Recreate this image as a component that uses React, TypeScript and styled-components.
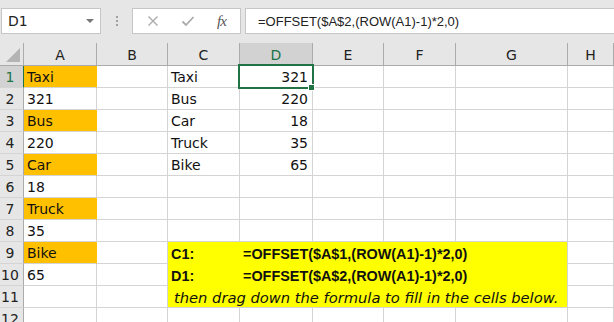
import React from "react";
import styled, { createGlobalStyle, css } from "styled-components";

const GlobalStyle = createGlobalStyle`
  html, body { margin: 0; padding: 0; background: #ffffff; overflow: hidden; }
  body { width: 614px; height: 322px; font-family: "Liberation Sans", Arial, sans-serif; }
`;

const CELL_FONT = `"DejaVu Sans", "Liberation Sans", sans-serif`;
const GRID = "#d4d4d4";
const HEAD_LINE = "#ababab";
const GREEN = "#217346";

const Page = styled.div`
  width: 614px;
  height: 322px;
  overflow: hidden;
  display: flex;
  flex-direction: column;
  background: #e6e6e6;
`;

const FormulaBar = styled.div`
  display: flex;
  align-items: center;
  height: 26px;
  padding: 8px 0 9px 1px;
`;

const Box = styled.div`
  height: 26px;
  box-sizing: border-box;
  background: #ffffff;
  border: 1px solid #c6c6c6;
  display: flex;
  align-items: center;
`;

const NameBox = styled(Box)`
  width: 100px;
  padding: 0 6px 0 6px;
  justify-content: space-between;
  font-family: ${CELL_FONT};
  font-size: 14px;
  color: #222;
`;

const Caret = styled.span`
  width: 0;
  height: 0;
  border-left: 4px solid transparent;
  border-right: 4px solid transparent;
  border-top: 4px solid #777;
`;

const Dots = styled.div`
  width: 31px;
  display: flex;
  flex-direction: column;
  align-items: center;
  gap: 2px;
  & > span {
    width: 2px;
    height: 2px;
    background: #a0a0a0;
  }
`;

const Buttons = styled(Box)`
  width: 109px;
  gap: 22px;
  padding-left: 14px;
`;

const Fx = styled.span`
  font-family: "Liberation Serif", "Times New Roman", serif;
  font-style: italic;
  font-size: 15px;
  color: #555;
  letter-spacing: -1px;
`;

const FormulaInput = styled(Box)`
  flex: 1;
  margin-left: 4px;
  margin-right: -2px;
  padding-left: 12px;
  font-family: "Liberation Sans", Arial, sans-serif;
  font-size: 13px;
  color: #222;
  white-space: nowrap;
`;

const Sheet = styled.div`
  display: grid;
  grid-template-columns: 24px 73px 71px 72px 73px 71px 72px 112px 1fr;
  grid-template-rows: 23px repeat(12, 22px);
  background: #ffffff;
`;

const Corner = styled.div`
  background: #e6e6e6;
  border-right: 1px solid ${HEAD_LINE};
  border-bottom: 1px solid ${HEAD_LINE};
  position: relative;
  &::after {
    content: "";
    position: absolute;
    right: 3px;
    bottom: 3px;
    width: 0;
    height: 0;
    border-left: 14px solid transparent;
    border-bottom: 14px solid #b4b4b4;
  }
`;

const ColHead = styled.div<{ $active?: boolean }>`
  box-sizing: border-box;
  background: ${(p) => (p.$active ? "#d2d2d2" : "#e6e6e6")};
  border-right: 1px solid ${HEAD_LINE};
  border-bottom: ${(p) => (p.$active ? `2px solid ${GREEN}` : `1px solid ${HEAD_LINE}`)};
  color: ${(p) => (p.$active ? GREEN : "#222")};
  font-family: ${CELL_FONT};
  font-size: 14px;
  display: flex;
  align-items: center;
  justify-content: center;
  padding-top: 2px;
`;

const RowHead = styled.div<{ $active?: boolean }>`
  box-sizing: border-box;
  background: ${(p) => (p.$active ? "#d2d2d2" : "#e6e6e6")};
  border-right: 1px solid ${(p) => (p.$active ? GREEN : HEAD_LINE)};
  border-bottom: 1px solid ${GRID};
  color: ${(p) => (p.$active ? GREEN : "#222")};
  font-family: ${CELL_FONT};
  font-size: 14px;
  display: flex;
  align-items: center;
  justify-content: center;
  padding: 1px 3px 0 0;
`;

const Cell = styled.div<{ $fill?: string; $right?: boolean }>`
  box-sizing: border-box;
  position: relative;
  background: ${(p) => p.$fill || "#ffffff"};
  border-right: 1px solid ${(p) => p.$fill || GRID};
  border-bottom: 1px solid ${GRID};
  font-family: ${CELL_FONT};
  font-size: 14px;
  color: #111;
  display: flex;
  align-items: center;
  justify-content: ${(p) => (p.$right ? "flex-end" : "flex-start")};
  padding: 1px 4px 0 3px;
  white-space: nowrap;
`;

const Selection = styled.div`
  position: absolute;
  left: -2px;
  top: -2px;
  right: -2px;
  bottom: -2px;
  border: 2px solid ${GREEN};
  pointer-events: none;
  z-index: 2;
`;

const Handle = styled.span`
  position: absolute;
  right: -3px;
  bottom: -4px;
  width: 5px;
  height: 5px;
  background: ${GREEN};
  border: 1px solid #ffffff;
`;

const Note = styled.div`
  grid-column: 4 / 9;
  grid-row: 10 / 13;
  box-sizing: border-box;
  background: #ffff00;
  border-right: 1px solid ${GRID};
  border-bottom: 1px solid ${GRID};
  display: grid;
  grid-template-columns: 72px 1fr;
  grid-template-rows: repeat(3, 22px);
  color: #111;
`;

const NoteText = styled.div<{ $bold?: boolean; $italic?: boolean; $wide?: boolean }>`
  display: flex;
  align-items: center;
  padding: 1px 0 0 3px;
  white-space: nowrap;
  font-family: ${CELL_FONT};
  font-size: 14px;
  ${(p) =>
    p.$bold &&
    css`
      font-family: "Liberation Sans", Arial, sans-serif;
      font-size: 14.4px;
      font-weight: bold;
    `}
  ${(p) =>
    p.$italic &&
    css`
      font-style: italic;
      font-size: 14.7px;
      padding-left: 6px;
    `}
  ${(p) => p.$wide && css`grid-column: 1 / 3;`}
`;

const colLetters = ["A", "B", "C", "D", "E", "F", "G", "H"];

type Row = { a?: string; orange?: boolean; c?: string; d?: string };

const rows: Row[] = [
  { a: "Taxi", orange: true, c: "Taxi", d: "321" },
  { a: "321", c: "Bus", d: "220" },
  { a: "Bus", orange: true, c: "Car", d: "18" },
  { a: "220", c: "Truck", d: "35" },
  { a: "Car", orange: true, c: "Bike", d: "65" },
  { a: "18" },
  { a: "Truck", orange: true },
  { a: "35" },
  { a: "Bike", orange: true },
  { a: "65" },
  {},
  {},
];

const XIcon = () => (
  <svg width="12" height="12" viewBox="0 0 12 12">
    <path d="M1.5 1.5 L10.5 10.5 M10.5 1.5 L1.5 10.5" stroke="#ababab" strokeWidth="1.4" fill="none" />
  </svg>
);

const CheckIcon = () => (
  <svg width="14" height="12" viewBox="0 0 14 12">
    <path d="M1.5 6.5 L5 10 L12.5 2" stroke="#ababab" strokeWidth="1.8" fill="none" />
  </svg>
);

export default function App() {
  return (
    <>
      <GlobalStyle />
      <Page>
        <FormulaBar>
          <NameBox>
            <span>D1</span>
            <Caret />
          </NameBox>
          <Dots>
            <span />
            <span />
            <span />
          </Dots>
          <Buttons>
            <XIcon />
            <CheckIcon />
            <Fx>fx</Fx>
          </Buttons>
          <FormulaInput>=OFFSET($A$2,(ROW(A1)-1)*2,0)</FormulaInput>
        </FormulaBar>
        <Sheet>
          <Corner />
          {colLetters.map((l) => (
            <ColHead key={l} $active={l === "D"}>
              {l}
            </ColHead>
          ))}
          {rows.map((r, i) => {
            const n = i + 1;
            const inNote = n >= 9 && n <= 11;
            return (
              <React.Fragment key={n}>
                <RowHead $active={n === 1}>{n}</RowHead>
                <Cell $fill={r.orange ? "#ffc000" : undefined}>{r.a}</Cell>
                <Cell />
                {!inNote && (
                  <>
                    <Cell>{r.c}</Cell>
                    <Cell $right>
                      {r.d}
                      {n === 1 && (
                        <Selection>
                          <Handle />
                        </Selection>
                      )}
                    </Cell>
                    <Cell />
                    <Cell />
                    <Cell />
                  </>
                )}
                {n === 9 && (
                  <Note>
                    <NoteText $bold>C1:</NoteText>
                    <NoteText $bold>=OFFSET($A$1,(ROW(A1)-1)*2,0)</NoteText>
                    <NoteText $bold>D1:</NoteText>
                    <NoteText $bold>=OFFSET($A$2,(ROW(A1)-1)*2,0)</NoteText>
                    <NoteText $italic $wide>
                      then drag down the formula to fill in the cells below.
                    </NoteText>
                  </Note>
                )}
                <Cell />
              </React.Fragment>
            );
          })}
        </Sheet>
      </Page>
    </>
  );
}
